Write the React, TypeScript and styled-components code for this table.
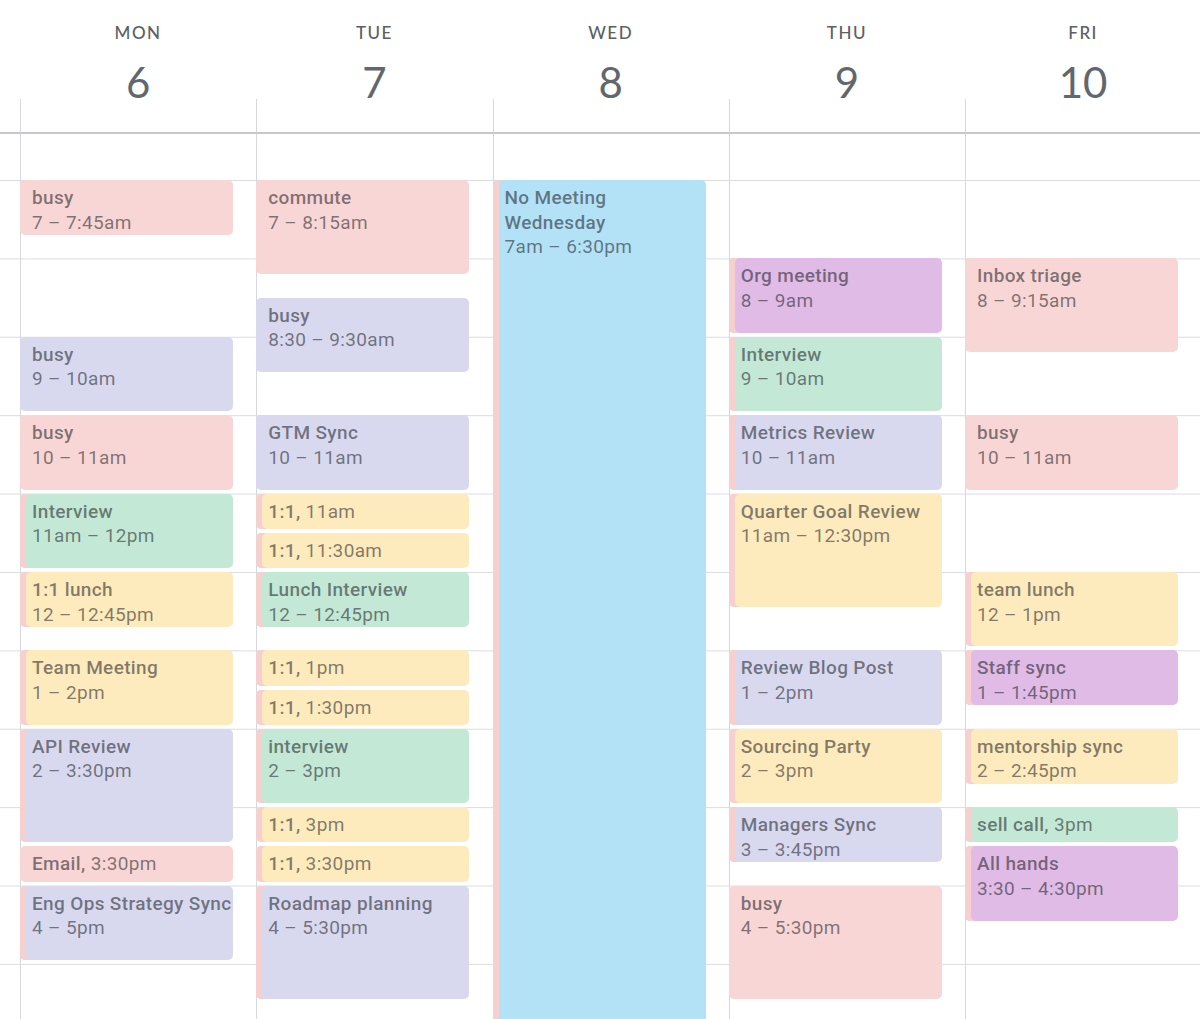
import type { FC } from 'react';
import styled, { createGlobalStyle, css } from 'styled-components';

type Tone = 'pink' | 'lavender' | 'green' | 'yellow' | 'purple' | 'blue';

type CalendarEvent = {
  title: string;
  time: string;
  start: number;
  end: number;
  tone: Tone;
  stripe?: boolean;
  inline?: boolean;
};

type Day = {
  name: string;
  date: number;
  events: CalendarEvent[];
};

const HOUR_HEIGHT = 78.4;
const FIRST_LINE = 46;
const FIRST_HOUR = 7;

const tones: Record<Tone, string> = {
  pink: '#f8d6d5',
  lavender: '#d8d9ef',
  green: '#c3e8d6',
  yellow: '#fdeabd',
  purple: '#dfbbe5',
  blue: '#b3e1f6',
};

const days: Day[] = [
  {
    name: 'MON',
    date: 6,
    events: [
      { title: 'busy', time: '7 – 7:45am', start: 7, end: 7.75, tone: 'pink' },
      { title: 'busy', time: '9 – 10am', start: 9, end: 10, tone: 'lavender' },
      { title: 'busy', time: '10 – 11am', start: 10, end: 11, tone: 'pink' },
      { title: 'Interview', time: '11am – 12pm', start: 11, end: 12, tone: 'green', stripe: true },
      { title: '1:1 lunch', time: '12 – 12:45pm', start: 12, end: 12.75, tone: 'yellow', stripe: true },
      { title: 'Team Meeting', time: '1 – 2pm', start: 13, end: 14, tone: 'yellow', stripe: true },
      { title: 'API Review', time: '2 – 3:30pm', start: 14, end: 15.5, tone: 'lavender', stripe: true },
      { title: 'Email', time: '3:30pm', start: 15.5, end: 16, tone: 'pink', inline: true },
      { title: 'Eng Ops Strategy Sync', time: '4 – 5pm', start: 16, end: 17, tone: 'lavender', stripe: true },
    ],
  },
  {
    name: 'TUE',
    date: 7,
    events: [
      { title: 'commute', time: '7 – 8:15am', start: 7, end: 8.25, tone: 'pink' },
      { title: 'busy', time: '8:30 – 9:30am', start: 8.5, end: 9.5, tone: 'lavender' },
      { title: 'GTM Sync', time: '10 – 11am', start: 10, end: 11, tone: 'lavender' },
      { title: '1:1', time: '11am', start: 11, end: 11.5, tone: 'yellow', stripe: true, inline: true },
      { title: '1:1', time: '11:30am', start: 11.5, end: 12, tone: 'yellow', stripe: true, inline: true },
      { title: 'Lunch Interview', time: '12 – 12:45pm', start: 12, end: 12.75, tone: 'green', stripe: true },
      { title: '1:1', time: '1pm', start: 13, end: 13.5, tone: 'yellow', stripe: true, inline: true },
      { title: '1:1', time: '1:30pm', start: 13.5, end: 14, tone: 'yellow', stripe: true, inline: true },
      { title: 'interview', time: '2 – 3pm', start: 14, end: 15, tone: 'green', stripe: true },
      { title: '1:1', time: '3pm', start: 15, end: 15.5, tone: 'yellow', stripe: true, inline: true },
      { title: '1:1', time: '3:30pm', start: 15.5, end: 16, tone: 'yellow', stripe: true, inline: true },
      { title: 'Roadmap planning', time: '4 – 5:30pm', start: 16, end: 17.5, tone: 'lavender', stripe: true },
    ],
  },
  {
    name: 'WED',
    date: 8,
    events: [
      { title: 'No Meeting\nWednesday', time: '7am – 6:30pm', start: 7, end: 18.5, tone: 'blue', stripe: true },
    ],
  },
  {
    name: 'THU',
    date: 9,
    events: [
      { title: 'Org meeting', time: '8 – 9am', start: 8, end: 9, tone: 'purple', stripe: true },
      { title: 'Interview', time: '9 – 10am', start: 9, end: 10, tone: 'green', stripe: true },
      { title: 'Metrics Review', time: '10 – 11am', start: 10, end: 11, tone: 'lavender', stripe: true },
      { title: 'Quarter Goal Review', time: '11am – 12:30pm', start: 11, end: 12.5, tone: 'yellow', stripe: true },
      { title: 'Review Blog Post', time: '1 – 2pm', start: 13, end: 14, tone: 'lavender', stripe: true },
      { title: 'Sourcing Party', time: '2 – 3pm', start: 14, end: 15, tone: 'yellow', stripe: true },
      { title: 'Managers Sync', time: '3 – 3:45pm', start: 15, end: 15.75, tone: 'lavender', stripe: true },
      { title: 'busy', time: '4 – 5:30pm', start: 16, end: 17.5, tone: 'pink' },
    ],
  },
  {
    name: 'FRI',
    date: 10,
    events: [
      { title: 'Inbox triage', time: '8 – 9:15am', start: 8, end: 9.25, tone: 'pink' },
      { title: 'busy', time: '10 – 11am', start: 10, end: 11, tone: 'pink' },
      { title: 'team lunch', time: '12 – 1pm', start: 12, end: 13, tone: 'yellow', stripe: true },
      { title: 'Staff sync', time: '1 – 1:45pm', start: 13, end: 13.75, tone: 'purple', stripe: true },
      { title: 'mentorship sync', time: '2 – 2:45pm', start: 14, end: 14.75, tone: 'yellow', stripe: true },
      { title: 'sell call', time: '3pm', start: 15, end: 15.5, tone: 'green', stripe: true, inline: true },
      { title: 'All hands', time: '3:30 – 4:30pm', start: 15.5, end: 16.5, tone: 'purple', stripe: true },
    ],
  },
];

const GlobalStyle = createGlobalStyle`
  body {
    margin: 0;
    background: #ffffff;
    font-family: Roboto, "Liberation Sans", sans-serif;
  }
`;

const StyledPage = styled.div`
  width: 1200px;
  height: 1019px;
  overflow: hidden;
  background: #ffffff;
`;

const columns = css`
  display: grid;
  grid-template-columns: 20px repeat(5, 236.25px);
`;

const StyledHeader = styled.div`
  ${columns};
  height: 132px;
  border-bottom: 2px solid #c8c8cc;
`;

const StyledHeaderCell = styled.div`
  display: flex;
  flex-direction: column;
  align-items: center;
  padding-top: 23px;
  background: linear-gradient(#d7d7e0, #d7d7e0) left bottom / 1px 33px no-repeat;
`;

const StyledDayName = styled.div`
  font-family: Lato, "Open Sans", sans-serif;
  font-size: 17px;
  line-height: 20px;
  font-weight: 500;
  letter-spacing: 1.5px;
  color: #5b6065;
`;

const StyledDayNumber = styled.div`
  margin-top: 15px;
  font-family: Lato, "Open Sans", sans-serif;
  font-size: 42px;
  line-height: 48px;
  font-weight: 400;
  color: #62676d;
`;

const StyledBody = styled.div`
  ${columns};
  height: 885px;
  background-image: linear-gradient(#dbdbe5 1px, transparent 1px);
  background-size: 100% ${HOUR_HEIGHT}px;
  background-position: 0 ${FIRST_LINE}px;
`;

const StyledDayColumn = styled.div`
  position: relative;
  background: linear-gradient(#d7d7e0, #d7d7e0) left top / 1px 100% no-repeat;
`;

const StyledEventCard = styled.div<{ $tone: Tone; $stripe: boolean; $top: number; $height: number }>`
  position: absolute;
  left: 0;
  top: ${({ $top }) => $top}px;
  width: 213px;
  height: ${({ $height }) => $height}px;
  box-sizing: border-box;
  padding: 6px 0 0 12px;
  border-radius: 5px;
  overflow: hidden;
  background: ${({ $tone }) => tones[$tone]};
  box-shadow: ${({ $stripe }) => ($stripe ? 'inset 6px 0 0 #f6cfcf' : 'none')};
  color: rgba(22, 22, 32, 0.55);
  font-size: 19px;
  line-height: 24.5px;
  letter-spacing: 0.35px;
`;

const StyledEventTitle = styled.span`
  display: block;
  font-weight: 500;
  white-space: pre;
`;

const StyledEventTime = styled.span`
  display: block;
  font-weight: 400;
  white-space: nowrap;
`;

const StyledInlineLine = styled.div`
  white-space: nowrap;
`;

const StyledInlineTitle = styled.span`
  font-weight: 500;
`;

const EventCard: FC<{ event: CalendarEvent }> = ({ event }) => {
  const top = FIRST_LINE + (event.start - FIRST_HOUR) * HOUR_HEIGHT;
  const height = (event.end - event.start) * HOUR_HEIGHT - 4;

  return (
    <StyledEventCard $tone={event.tone} $stripe={!!event.stripe} $top={top} $height={height}>
      {event.inline ? (
        <StyledInlineLine>
          <StyledInlineTitle>{event.title},</StyledInlineTitle> {event.time}
        </StyledInlineLine>
      ) : (
        <>
          <StyledEventTitle>{event.title}</StyledEventTitle>
          <StyledEventTime>{event.time}</StyledEventTime>
        </>
      )}
    </StyledEventCard>
  );
};

const App: FC = () => {
  return (
    <StyledPage>
      <GlobalStyle />
      <StyledHeader>
        <div />
        {days.map((day) => (
          <StyledHeaderCell key={day.name}>
            <StyledDayName>{day.name}</StyledDayName>
            <StyledDayNumber>{day.date}</StyledDayNumber>
          </StyledHeaderCell>
        ))}
      </StyledHeader>
      <StyledBody>
        <div />
        {days.map((day) => (
          <StyledDayColumn key={day.name}>
            {day.events.map((event, index) => (
              <EventCard key={index} event={event} />
            ))}
          </StyledDayColumn>
        ))}
      </StyledBody>
    </StyledPage>
  );
};

export default App;
